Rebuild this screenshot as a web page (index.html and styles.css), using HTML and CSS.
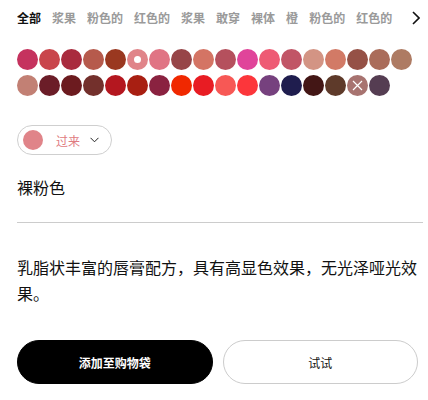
FILE: index.html
```html
<!DOCTYPE html>
<html lang="zh">
<head>
<meta charset="utf-8">
<link rel="stylesheet" href="styles.css">
</head>
<body>
<div class="page">
  <div class="tabs-bar">
    <div class="tabs">
      <span class="tab active">全部</span>
      <span class="tab">浆果</span>
      <span class="tab">粉色的</span>
      <span class="tab">红色的</span>
      <span class="tab">浆果</span>
      <span class="tab">敢穿</span>
      <span class="tab">裸体</span>
      <span class="tab">橙</span>
      <span class="tab">粉色的</span>
      <span class="tab">红色的</span>
      <span class="tab">电</span>
    </div>
    <svg class="next" width="8" height="14" viewBox="0 0 8 14"><path d="M1 1 L7 7 L1 13" fill="none" stroke="#111" stroke-width="1.6"/></svg>
  </div>

  <div class="swatches">
    <span class="sw" style="background:#c5325e"></span>
    <span class="sw" style="background:#c9454b"></span>
    <span class="sw" style="background:#a92b3e"></span>
    <span class="sw" style="background:#b65a4c"></span>
    <span class="sw" style="background:#9a3820"></span>
    <span class="sw selected" style="background:#e08489"></span>
    <span class="sw" style="background:#e07484"></span>
    <span class="sw" style="background:#974548"></span>
    <span class="sw" style="background:#d47464"></span>
    <span class="sw" style="background:#b5505d"></span>
    <span class="sw" style="background:#e0449a"></span>
    <span class="sw" style="background:#ee5b74"></span>
    <span class="sw" style="background:#c15566"></span>
    <span class="sw" style="background:#d39484"></span>
    <span class="sw" style="background:#d27a66"></span>
    <span class="sw" style="background:#955146"></span>
    <span class="sw" style="background:#aa6c5a"></span>
    <span class="sw" style="background:#ae7b63"></span>

    <span class="sw" style="background:#c28074"></span>
    <span class="sw" style="background:#6b1d28"></span>
    <span class="sw" style="background:#6c1b1f"></span>
    <span class="sw" style="background:#73302c"></span>
    <span class="sw" style="background:#b4171f"></span>
    <span class="sw" style="background:#a81f12"></span>
    <span class="sw" style="background:#8a2240"></span>
    <span class="sw" style="background:#f02800"></span>
    <span class="sw" style="background:#e81c23"></span>
    <span class="sw" style="background:#f75855"></span>
    <span class="sw" style="background:#fc363b"></span>
    <span class="sw" style="background:#76417e"></span>
    <span class="sw" style="background:#1f1d4e"></span>
    <span class="sw" style="background:#431615"></span>
    <span class="sw" style="background:#5e3a2a"></span>
    <span class="sw unavailable" style="background:#a77370"><svg width="11" height="11" viewBox="0 0 11 11"><path d="M1 1 L10 10 M10 1 L1 10" stroke="#fff" stroke-width="1.2"/></svg></span>
    <span class="sw" style="background:#553d52"></span>
  </div>

  <div class="picker">
    <span class="picker-dot"></span>
    <span class="picker-label">过来</span>
    <svg class="picker-caret" width="9" height="6" viewBox="0 0 9 6"><path d="M0.5 0.8 L4.5 4.8 L8.5 0.8" fill="none" stroke="#222" stroke-width="1"/></svg>
  </div>

  <div class="shade-name">裸粉色</div>
  <hr class="divider">

  <p class="desc">乳脂状丰富的唇膏配方，具有高显色效果，无光泽哑光效果。</p>

  <div class="actions">
    <button class="btn btn-primary">添加至购物袋</button>
    <button class="btn btn-secondary">试试</button>
  </div>
</div>
</body>
</html>
```

FILE: styles.css
```css
* { box-sizing: border-box; }
html, body { margin: 0; padding: 0; background: #fff; }
body {
  font-family: "Noto Sans CJK SC", "Noto Sans", sans-serif;
  color: #111;
}
.page {
  padding: 8px 5px 0 17px;
}
.tabs-bar {
  display: flex;
  align-items: center;
  height: 20px;
}
.tabs {
  display: flex;
  gap: 11px;
  width: 386px;
  overflow: hidden;
  white-space: nowrap;
  font-size: 12px;
  font-weight: 700;
  line-height: 20px;
}
.tab { color: #9a9a9a; flex: none; }
.tab.active { color: #111; }
.next { margin-left: 9px; flex: none; }

.swatches {
  display: grid;
  grid-template-columns: repeat(18, 21px);
  grid-auto-rows: 21px;
  column-gap: 1px;
  row-gap: 5px;
  margin-top: 21px;
}
.sw {
  width: 21px;
  height: 21px;
  border-radius: 50%;
  display: flex;
  align-items: center;
  justify-content: center;
}
.sw.selected::after {
  content: "";
  width: 7px;
  height: 7px;
  border-radius: 50%;
  background: #fff;
}

.picker {
  display: inline-flex;
  align-items: center;
  height: 30px;
  width: 95px;
  margin-top: 29px;
  padding: 0 12px 0 5px;
  border: 1px solid #cfcfcf;
  border-radius: 15px;
}
.picker-dot {
  width: 20px;
  height: 20px;
  border-radius: 50%;
  background: #e08489;
  flex: none;
}
.picker-label {
  margin-left: 13px;
  font-size: 12px;
  color: #e07a80;
}
.picker-caret { margin-left: 10px; }

.shade-name {
  margin-top: 20px;
  font-size: 16px;
  line-height: 24px;
}
.divider {
  border: none;
  border-top: 1px solid #cccccc;
  margin: 23px 0 0 0;
}
.desc {
  margin: 31px 0 0 0;
  font-size: 16px;
  line-height: 26px;
}
.actions {
  display: flex;
  gap: 10px;
  margin: 34px 5px 0 0;
}
.btn {
  flex: 1;
  height: 44px;
  border-radius: 22px;
  font-family: "Noto Sans CJK SC", "Noto Sans", sans-serif;
  font-size: 12px;
}
.btn-primary {
  background: #000;
  color: #fff;
  border: 1px solid #000;
  font-weight: 700;
}
.btn-secondary {
  background: #fff;
  color: #111;
  border: 1px solid #cccccc;
}
```
